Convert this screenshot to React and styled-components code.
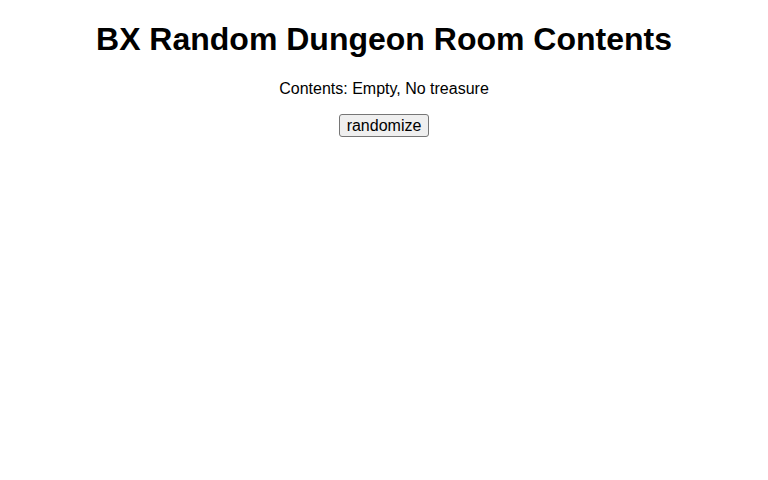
import React, { useState } from "react";
import styled, { createGlobalStyle } from "styled-components";

const GlobalStyle = createGlobalStyle`
  body {
    margin: 0;
    background: #ffffff;
    font-family: "Liberation Sans", Arial, sans-serif;
    color: #000000;
  }
`;

const contents = ["Empty", "Monster", "Trap", "Special"];
const treasure = ["No treasure", "Treasure"];

const pick = (list) => list[Math.floor(Math.random() * list.length)];

const App = () => {
  const [room, setRoom] = useState({ kind: "Empty", loot: "No treasure" });

  const randomize = () => {
    setRoom({ kind: pick(contents), loot: pick(treasure) });
  };

  return (
    <Page>
      <GlobalStyle />
      <Title>BX Random Dungeon Room Contents</Title>
      <Result>
        Contents: {room.kind}, {room.loot}
      </Result>
      <RollButton onClick={randomize}>randomize</RollButton>
    </Page>
  );
};

export default App;

const Page = styled.div`
  text-align: center;
`;

const Title = styled.h1`
  font-size: 32px;
  font-weight: 700;
  margin: 21.44px 0;
  line-height: 37px;
`;

const Result = styled.p`
  font-size: 16px;
  line-height: 18px;
  margin: 16px 0;
`;

const RollButton = styled.button`
  font-family: "Liberation Sans", Arial, sans-serif;
  font-size: 16px;
  line-height: 19px;
  padding: 1px 7px;
  height: 23px;
  color: #000000;
  background: #efefef;
  border: 1px solid #767676;
  border-radius: 3px;
  cursor: pointer;

  &:hover {
    background: #e5e5e5;
  }
`;
